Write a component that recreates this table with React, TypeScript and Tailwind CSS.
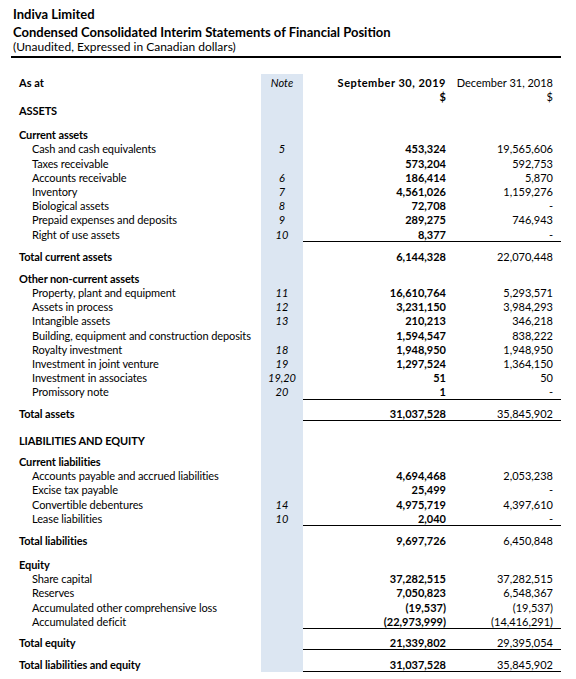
import React from "react";

// ---------------------------------------------------------------------------
// Statement data
// ---------------------------------------------------------------------------
type Kind = "section" | "item" | "total" | "heading";

interface Row {
  kind: Kind;
  label: string;
  note?: string;
  cur?: string;
  prev?: string;
  line?: boolean;
  gap?: string; // spacer class before the row
}

const rows: Row[] = [
  { kind: "heading", label: "ASSETS" },
  { kind: "section", label: "Current assets", gap: "h-[10px]" },
  { kind: "item", label: "Cash and cash equivalents", note: "5", cur: "453,324", prev: "19,565,606" },
  { kind: "item", label: "Taxes receivable", cur: "573,204", prev: "592,753" },
  { kind: "item", label: "Accounts receivable", note: "6", cur: "186,414", prev: "5,870" },
  { kind: "item", label: "Inventory", note: "7", cur: "4,561,026", prev: "1,159,276" },
  { kind: "item", label: "Biological assets", note: "8", cur: "72,708", prev: "-" },
  { kind: "item", label: "Prepaid expenses and deposits", note: "9", cur: "289,275", prev: "746,943" },
  { kind: "item", label: "Right of use assets", note: "10", cur: "8,377", prev: "-", line: true },
  { kind: "total", label: "Total current assets", cur: "6,144,328", prev: "22,070,448", gap: "h-[8px]" },
  { kind: "section", label: "Other non-current assets", gap: "h-[8px]" },
  { kind: "item", label: "Property, plant and equipment", note: "11", cur: "16,610,764", prev: "5,293,571" },
  { kind: "item", label: "Assets in process", note: "12", cur: "3,231,150", prev: "3,984,293" },
  { kind: "item", label: "Intangible assets", note: "13", cur: "210,213", prev: "346,218" },
  { kind: "item", label: "Building, equipment and construction deposits", cur: "1,594,547", prev: "838,222" },
  { kind: "item", label: "Royalty investment", note: "18", cur: "1,948,950", prev: "1,948,950" },
  { kind: "item", label: "Investment in joint venture", note: "19", cur: "1,297,524", prev: "1,364,150" },
  { kind: "item", label: "Investment in associates", note: "19,20", cur: "51", prev: "50" },
  { kind: "item", label: "Promissory note", note: "20", cur: "1", prev: "-", line: true },
  { kind: "total", label: "Total assets", cur: "31,037,528", prev: "35,845,902", line: true, gap: "h-[7px]" },
  { kind: "heading", label: "LIABILITIES AND EQUITY", gap: "h-[13px]" },
  { kind: "section", label: "Current liabilities", gap: "h-[7px]" },
  { kind: "item", label: "Accounts payable and accrued liabilities", cur: "4,694,468", prev: "2,053,238" },
  { kind: "item", label: "Excise tax payable", cur: "25,499", prev: "-" },
  { kind: "item", label: "Convertible debentures", note: "14", cur: "4,975,719", prev: "4,397,610" },
  { kind: "item", label: "Lease liabilities", note: "10", cur: "2,040", prev: "-", line: true },
  { kind: "total", label: "Total liabilities", cur: "9,697,726", prev: "6,450,848", gap: "h-[8px]" },
  { kind: "section", label: "Equity", gap: "h-[10px]" },
  { kind: "item", label: "Share capital", cur: "37,282,515", prev: "37,282,515" },
  { kind: "item", label: "Reserves", cur: "7,050,823", prev: "6,548,367" },
  { kind: "item", label: "Accumulated other comprehensive loss", cur: "(19,537)", prev: "(19,537)" },
  { kind: "item", label: "Accumulated deficit", cur: "(22,973,999)", prev: "(14,416,291)", line: true },
  { kind: "total", label: "Total equity", cur: "21,339,802", prev: "29,395,054", line: true, gap: "h-[7px]" },
  { kind: "total", label: "Total liabilities and equity", cur: "31,037,528", prev: "35,845,902", line: true, gap: "h-[8px]" },
];

// ---------------------------------------------------------------------------
// Pieces
// ---------------------------------------------------------------------------
function Spacer({ h }: { h: string }) {
  return (
    <div className={`flex ${h}`}>
      <div className="w-[261px]" />
      <div className="w-[42px] bg-[#dce6f2]" />
    </div>
  );
}

function StatementRow({ row }: { row: Row }) {
  const bold = row.kind !== "item";
  return (
    <div className="flex h-[14.2px] leading-[14px]">
      <div
        className={`w-[261px] whitespace-nowrap tracking-[-0.1px] ${row.kind === "item" ? "pl-[32px]" : "pl-[19px]"} ${
          bold ? "font-bold" : ""
        }`}
      >
        {row.label}
      </div>
      <div className="w-[42px] bg-[#dce6f2] text-center italic">{row.note}</div>
      <div className={`flex w-[258px] ${row.line ? "border-b border-black" : ""}`}>
        <div className="w-[143px] text-right font-bold">{row.cur}</div>
        <div className="w-[107px] text-right">{row.prev}</div>
      </div>
    </div>
  );
}

// ---------------------------------------------------------------------------
// Page
// ---------------------------------------------------------------------------
export default function App() {
  return (
    <div className="w-[576px] h-[679px] bg-white text-black font-['Lato',sans-serif] text-[11px]">
      <div className="pl-[13px] pt-[5px]">
        <div className="h-[18px] leading-[18px] text-[13px] font-bold">Indiva Limited</div>
        <div className="h-[18px] leading-[18px] text-[13px] font-bold">
          Condensed Consolidated Interim Statements of Financial Position
        </div>
        <div className="h-[12px] leading-[12px] text-[12px]">(Unaudited, Expressed in Canadian dollars)</div>
      </div>
      <div className="ml-[11px] mt-[3px] w-[550px] h-[2px] bg-black" />

      <div className="mt-[16px] flex flex-col">
        <Spacer h="h-[2px]" />
        <div className="flex h-[14px] leading-[14px]">
          <div className="w-[261px] pl-[19px] font-bold">As at</div>
          <div className="w-[42px] bg-[#dce6f2] text-center italic">Note</div>
          <div className="flex w-[258px]">
            <div className="w-[143px] text-right font-bold whitespace-nowrap tracking-[0.5px]">September 30, 2019</div>
            <div className="w-[107px] text-right whitespace-nowrap">December 31, 2018</div>
          </div>
        </div>
        <div className="flex h-[14px] leading-[14px]">
          <div className="w-[261px]" />
          <div className="w-[42px] bg-[#dce6f2]" />
          <div className="flex w-[258px]">
            <div className="w-[143px] text-right font-bold">$</div>
            <div className="w-[107px] text-right">$</div>
          </div>
        </div>
        {rows.map((row, i) => (
          <React.Fragment key={i}>
            {row.gap && <Spacer h={row.gap} />}
            <StatementRow row={row} />
          </React.Fragment>
        ))}
      </div>
    </div>
  );
}
